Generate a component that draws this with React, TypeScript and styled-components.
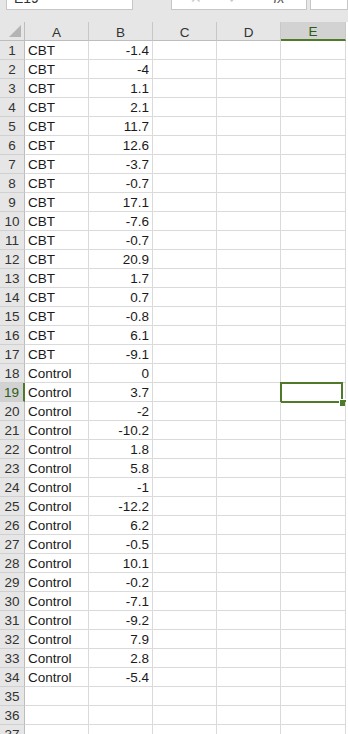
import React from 'react'
import styled, { createGlobalStyle } from 'styled-components'

const green = '#4e7a2a'
const headerBg = '#e6e6e6'
const gridLine = '#dadada'

const GlobalStyle = createGlobalStyle`
  html, body {
    margin: 0;
    padding: 0;
    background: #ffffff;
    overflow: hidden;
  }
`

const Page = styled.div`
  width: 348px;
  height: 734px;
  overflow: hidden;
  background: #ffffff;
  font-family: 'Liberation Sans', Arial, sans-serif;
  display: flex;
  flex-direction: column;
`

const FormulaBar = styled.div`
  height: 22px;
  flex: none;
  background: ${headerBg};
  display: flex;
  align-items: flex-start;
`

const BarBox = styled.div<{ $width: number; $left: number }>`
  width: ${({ $width }) => $width}px;
  margin-left: ${({ $left }) => $left}px;
  height: 10px;
  background: #ffffff;
  border: 1px solid #c6c6c6;
  border-top: none;
  box-sizing: border-box;
  overflow: hidden;
  position: relative;
  font-size: 14px;
  color: #333;
`

const CutText = styled.span<{ $x: number; $color?: string; $italic?: boolean }>`
  position: absolute;
  left: ${({ $x }) => $x}px;
  top: -9px;
  line-height: 14px;
  color: ${({ $color = '#333' }) => $color};
  font-style: ${({ $italic }) => ($italic ? 'italic' : 'normal')};
`

const Gap = styled.div`
  width: 38px;
  height: 10px;
`

const Sheet = styled.div`
  display: grid;
  grid-template-columns: 25px 64px 64px 64px 64px 65px 2px;
  grid-auto-rows: 19px;
  font-size: 13.5px;
  color: #1a1a1a;
`

const Corner = styled.div`
  background: ${headerBg};
  border-right: 1px solid #bdbdbd;
  border-bottom: 1px solid #bdbdbd;
  box-sizing: border-box;
  position: relative;
  &::after {
    content: '';
    position: absolute;
    right: 3px;
    bottom: 3px;
    border-style: solid;
    border-width: 0 0 12px 12px;
    border-color: transparent transparent #b4b4b4 transparent;
  }
`

const ColHead = styled.div<{ $active?: boolean }>`
  background: ${({ $active }) => ($active ? '#d2d2d2' : headerBg)};
  border-right: 1px solid #c8c8c8;
  border-bottom: ${({ $active }) => ($active ? `2px solid ${green}` : '1px solid #bdbdbd')};
  box-sizing: border-box;
  display: flex;
  align-items: center;
  justify-content: center;
  color: ${({ $active }) => ($active ? '#2e5c18' : '#333')};
  padding-top: 2px;
`

const RowHead = styled.div<{ $active?: boolean }>`
  background: ${({ $active }) => ($active ? '#d2d2d2' : headerBg)};
  border-right: ${({ $active }) => ($active ? `2px solid ${green}` : '1px solid #bdbdbd')};
  border-bottom: 1px solid #d0d0d0;
  box-sizing: border-box;
  display: flex;
  align-items: center;
  justify-content: center;
  color: ${({ $active }) => ($active ? '#2e5c18' : '#333')};
`

const Cell = styled.div<{ $align?: 'left' | 'right' }>`
  border-right: 1px solid ${gridLine};
  border-bottom: 1px solid ${gridLine};
  box-sizing: border-box;
  display: flex;
  align-items: center;
  justify-content: ${({ $align = 'left' }) => ($align === 'right' ? 'flex-end' : 'flex-start')};
  padding: 1px 3px 0 3px;
  white-space: nowrap;
  position: relative;
`

const Gutter = styled.div`
  background: #ffffff;
`

const Selection = styled.div`
  position: absolute;
  left: -1px;
  top: -1px;
  right: 2px;
  bottom: -2px;
  border: 2px solid ${green};
  &::after {
    content: '';
    position: absolute;
    right: -6px;
    bottom: -6px;
    width: 6px;
    height: 6px;
    background: ${green};
    border: 1px solid #ffffff;
  }
`

const values = [
  -1.4, -4, 1.1, 2.1, 11.7, 12.6, -3.7, -0.7, 17.1, -7.6, -0.7, 20.9, 1.7, 0.7, -0.8, 6.1, -9.1,
  0, 3.7, -2, -10.2, 1.8, 5.8, -1, -12.2, 6.2, -0.5, 10.1, -0.2, -7.1, -9.2, 7.9, 2.8, -5.4,
]

const rows = values.map((v, i) => ({ group: i < 17 ? 'CBT' : 'Control', value: v }))
const columns = ['A', 'B', 'C', 'D', 'E']
const activeRow = 19

export default function App() {
  return (
    <Page>
      <GlobalStyle />
      <FormulaBar>
        <BarBox $width={127} $left={6}>
          <CutText $x={7}>E19</CutText>
        </BarBox>
        <Gap />
        <BarBox $width={137} $left={0}>
          <CutText $x={18} $color="#c8c8c8">✕</CutText>
          <CutText $x={56} $color="#c8c8c8">✓</CutText>
          <CutText $x={102} $color="#555" $italic>
            fx
          </CutText>
        </BarBox>
        <BarBox $width={38} $left={3} />
      </FormulaBar>
      <Sheet>
        <Corner />
        {columns.map((c) => (
          <ColHead key={c} $active={c === 'E'}>
            {c}
          </ColHead>
        ))}
        <Gutter />
        {rows.map((r, i) => (
          <React.Fragment key={i}>
            <RowHead $active={i + 1 === activeRow}>{i + 1}</RowHead>
            <Cell>{r.group}</Cell>
            <Cell $align="right">{r.value}</Cell>
            <Cell />
            <Cell />
            <Cell>{i + 1 === activeRow && <Selection />}</Cell>
            <Gutter />
          </React.Fragment>
        ))}
        {[35, 36, 37].map((n) => (
          <React.Fragment key={n}>
            <RowHead>{n}</RowHead>
            <Cell />
            <Cell />
            <Cell />
            <Cell />
            <Cell />
            <Gutter />
          </React.Fragment>
        ))}
      </Sheet>
    </Page>
  )
}
